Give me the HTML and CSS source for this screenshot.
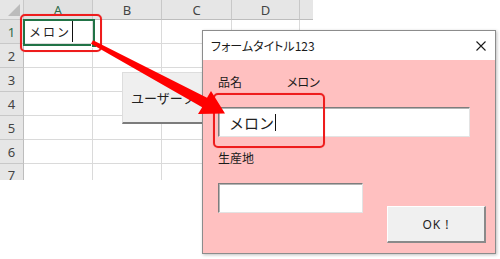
FILE: index.html
```html
<!DOCTYPE html>
<html lang="ja">
<head>
<meta charset="utf-8">
<title>UserForm</title>
<link rel="stylesheet" href="styles.css">
</head>
<body>
<div class="page">
  <div class="sheet">
    <div class="hd corner"><span class="tri"></span></div>
    <div class="hd col sel">A</div>
    <div class="hd col">B</div>
    <div class="hd col">C</div>
    <div class="hd col">D</div>
    <div class="hd col last"></div>

    <div class="hd row sel">1</div>
    <div class="cell a1"><span class="cell-text">メロン</span><span class="caret"></span></div>
    <div class="cell"></div><div class="cell"></div><div class="cell"></div><div class="cell last"></div>

    <div class="hd row">2</div>
    <div class="cell"></div><div class="cell"></div><div class="cell"></div><div class="cell"></div><div class="cell last"></div>

    <div class="hd row">3</div>
    <div class="cell"></div><div class="cell"></div><div class="cell"></div><div class="cell"></div><div class="cell last"></div>

    <div class="hd row">4</div>
    <div class="cell"></div><div class="cell"></div><div class="cell"></div><div class="cell"></div><div class="cell last"></div>

    <div class="hd row">5</div>
    <div class="cell"></div><div class="cell"></div><div class="cell"></div><div class="cell"></div><div class="cell last"></div>

    <div class="hd row">6</div>
    <div class="cell"></div><div class="cell"></div><div class="cell"></div><div class="cell"></div><div class="cell last"></div>

    <div class="hd row cut">7</div>
    <div class="cell cut"></div><div class="cell cut"></div><div class="cell cut"></div><div class="cell cut"></div><div class="cell cut last"></div>
  </div>

  <div class="selection"><span class="fill-handle"></span></div>
  <div class="mark mark-cell"></div>

  <div class="show-btn"><span class="show-text">ユーザーフォーム</span></div>

  <div class="dialog">
    <div class="titlebar">
      <span class="title">フォームタイトル123</span>
      <svg class="close" width="10" height="10" viewBox="0 0 10 10"><path d="M0.5 0.5 L9.5 9.5 M9.5 0.5 L0.5 9.5" stroke="#1a1a1a" stroke-width="1.1" fill="none"/></svg>
    </div>
    <div class="form-body">
      <div class="label-row">
        <span class="lbl lbl-name">品名</span>
        <span class="lbl">メロン</span>
      </div>
      <div class="textbox tb-wide"><span class="tb-text">メロン</span><span class="caret tb-caret"></span></div>
      <span class="lbl lbl-origin">生産地</span>
      <div class="bottom-row">
        <div class="textbox tb-narrow"></div>
        <div class="ok-btn">OK !</div>
      </div>
    </div>
  </div>

  <div class="mark mark-box"></div>

  <svg class="arrow" width="500" height="259" viewBox="0 0 500 259">
    <polygon points="91.0,43.8 93.0,40.2 207.0,97.8 211.0,91.0 225,113.5 198.0,114.0 202.2,107.2" fill="#ff0000"/>
  </svg>
</div>
</body>
</html>
```
FILE: styles.css
```css
* { box-sizing: border-box; }
html, body { margin: 0; padding: 0; background: #ffffff; }
body { width: 500px; height: 259px; overflow: hidden; font-family: "Noto Sans CJK JP", "Noto Sans", sans-serif; }

.page { position: relative; width: 500px; height: 259px; }

.sheet {
  display: grid;
  grid-template-columns: 24px 69px 69px 70px 68px 13px;
  grid-template-rows: 20px repeat(6, 24px) 16px;
  width: 313px;
}

.hd {
  background: #e6e6e6;
  color: #444444;
  font-family: "Noto Sans", "Liberation Sans", sans-serif;
  font-size: 13px;
  display: flex;
  align-items: center;
  justify-content: center;
  border-right: 1px solid #c8c8c8;
  border-bottom: 1px solid #c8c8c8;
}
.hd.col.last { border-right: none; }
.hd.sel { color: #2f6b47; background: #e1e1e1; }
.hd.row { border-right: 1px solid #bdbdbd; }
.hd.col { border-bottom: 1px solid #bdbdbd; }
.hd.cut { border-bottom: none; align-items: flex-start; padding-top: 2px; }

.corner { position: relative; }
.tri {
  position: absolute;
  right: 3px;
  bottom: 3px;
  width: 0;
  height: 0;
  border-left: 12px solid transparent;
  border-bottom: 12px solid #bcbcbc;
}

.cell {
  border-right: 1px solid #dadada;
  border-bottom: 1px solid #dadada;
  background: #ffffff;
}
.cell.last { border-right: none; }
.cell.cut { border-bottom: none; }

.a1 {
  display: flex;
  align-items: center;
  padding-left: 5px;
}
.cell-text {
  font-size: 12px;
  letter-spacing: 2px;
  color: #222222;
}
.caret {
  display: inline-block;
  width: 1px;
  height: 21px;
  background: #111111;
  margin-left: 1px;
}

.selection {
  position: absolute;
  left: 23px;
  top: 19px;
  width: 72px;
  height: 27px;
  border: 2px solid #217346;
}
.fill-handle {
  position: absolute;
  right: -4px;
  bottom: -4px;
  width: 6px;
  height: 6px;
  background: #217346;
  border: 1px solid #ffffff;
}

.mark {
  position: absolute;
  border: 2px solid #ee1d1d;
  border-radius: 5px;
  box-shadow: 0 0 1px rgba(200, 0, 0, 0.4);
}
.mark-cell { left: 20px; top: 14px; width: 82px; height: 38px; }
.mark-box { left: 213px; top: 93px; width: 112px; height: 55px; }

.show-btn {
  position: absolute;
  left: 122px;
  top: 72px;
  width: 110px;
  height: 52px;
  background: #efefef;
  border-top: 1px solid #dddddd;
  border-left: 1px solid #dddddd;
  border-bottom: 2px solid #7c7c7c;
  border-right: 2px solid #7c7c7c;
  display: flex;
  align-items: center;
  padding-left: 8px;
  font-size: 13px;
  color: #222222;
  white-space: nowrap;
}

.dialog {
  position: absolute;
  left: 202px;
  top: 30px;
  width: 294px;
  height: 224px;
  border: 1px solid #8c8c8c;
  box-shadow: 1px 1px 3px rgba(0, 0, 0, 0.25);
  display: flex;
  flex-direction: column;
  background: #ffc0c0;
}
.titlebar {
  height: 29px;
  background: #ffffff;
  display: flex;
  align-items: center;
  justify-content: space-between;
  padding: 0 9px 0 8px;
}
.title {
  font-size: 12px;
  font-feature-settings: "palt";
  color: #1a1a1a;
}

.form-body {
  flex: 1;
  display: flex;
  flex-direction: column;
  align-items: flex-start;
  padding: 14px 0 0 15px;
}
.label-row { display: flex; }
.lbl {
  font-size: 12px;
  line-height: 16px;
  color: #1a1a1a;
  font-feature-settings: "palt";
}
.lbl-name { width: 69px; }
.lbl-origin { margin-top: 13px; }

.textbox {
  background: #ffffff;
  height: 30px;
  border-top: 1px solid #7d7d7d;
  border-left: 1px solid #7d7d7d;
  border-bottom: 1px solid #e3e3e3;
  border-right: 1px solid #e3e3e3;
  box-shadow: inset 1px 1px 0 #b4b4b4;
  display: flex;
  align-items: center;
}
.tb-wide { width: 252px; margin-top: 17px; padding-left: 10px; }
.tb-text { font-size: 15px; color: #222222; }
.tb-caret { height: 17px; margin-left: 1px; }
.tb-narrow { width: 145px; }

.bottom-row {
  display: flex;
  align-items: flex-start;
  margin-top: 17px;
}
.ok-btn {
  width: 99px;
  height: 37px;
  margin-left: 24px;
  margin-top: 23px;
  background: #f0f0f0;
  border-top: 1px solid #ffffff;
  border-left: 1px solid #ffffff;
  border-bottom: 2px solid #8a8a8a;
  border-right: 2px solid #8a8a8a;
  display: flex;
  align-items: center;
  justify-content: center;
  font-family: "Noto Sans", "Liberation Sans", sans-serif;
  font-size: 12px;
  color: #222222;
  letter-spacing: 1px;
}

.arrow {
  position: absolute;
  left: 0;
  top: 0;
  pointer-events: none;
}
```
